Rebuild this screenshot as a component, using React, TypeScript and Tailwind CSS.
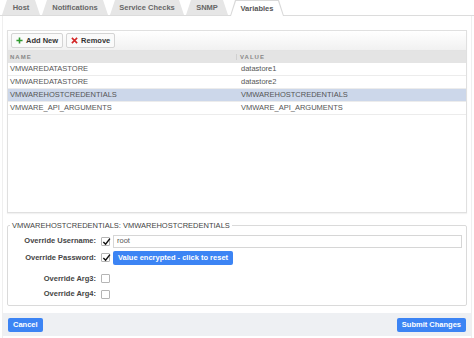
import React from 'react';

const TABS = [
  { label: 'Host', w: 38 },
  { label: 'Notifications', w: 66 },
  { label: 'Service Checks', w: 74 },
  { label: 'SNMP', w: 42 },
  { label: 'Variables', w: 54, active: true },
];

const ROWS = [
  { name: 'VMWAREDATASTORE', value: 'datastore1' },
  { name: 'VMWAREDATASTORE', value: 'datastore2' },
  { name: 'VMWAREHOSTCREDENTIALS', value: 'VMWAREHOSTCREDENTIALS', selected: true },
  { name: 'VMWARE_API_ARGUMENTS', value: 'VMWARE_API_ARGUMENTS' },
];

function Tab({ label, w, active }: { label: string; w: number; active?: boolean }) {
  if (active) {
    return (
      <div
        className="-mb-px h-[16px] bg-[#d9d9d9] pt-px [clip-path:polygon(5px_0,calc(100%_-_5px)_0,100%_100%,0_100%)]"
        style={{ width: w }}
      >
        <div className="flex h-full items-center justify-center bg-white font-bold text-[#555] [clip-path:polygon(6px_0,calc(100%_-_6px)_0,calc(100%_-_1px)_100%,1px_100%)]">
          {label}
        </div>
      </div>
    );
  }
  return (
    <div
      className="flex h-[15px] items-center justify-center bg-[#e6e6e6] font-bold text-[#666] [clip-path:polygon(5px_0,calc(100%_-_5px)_0,100%_100%,0_100%)]"
      style={{ width: w }}
    >
      {label}
    </div>
  );
}

function Check({ checked }: { checked?: boolean }) {
  return (
    <span className="relative inline-flex h-[9px] w-[9px] items-center justify-center rounded-[1px] border border-[#b5b5b5] bg-white">
      {checked && (
        <svg width="9" height="9" viewBox="0 0 10 10" className="absolute -top-[1px] left-0">
          <path d="M1.5 5.5 L4 8 L8.8 1.8" fill="none" stroke="#111" strokeWidth="1.6" />
        </svg>
      )}
    </span>
  );
}

function FieldRow({ label, children, className }: { label: string; children?: React.ReactNode; className?: string }) {
  return (
    <div className={'flex items-center ' + (className ?? '')}>
      <div className="w-[89px] pr-[1px] text-right font-bold text-[#444]">{label}</div>
      <div className="ml-[4px] flex items-center">{children}</div>
    </div>
  );
}

export default function App() {
  return (
    <div className="h-[338px] w-[474px] overflow-hidden bg-white font-['Liberation_Sans',Arial,sans-serif] text-[7.5px] leading-none text-[#444]">
      {/* Tab strip */}
      <div className="flex h-[16px] items-end gap-[2px] border-b border-[#dcdcdc] pl-[2px]">
        {TABS.map((t) => (
          <Tab key={t.label} {...t} />
        ))}
      </div>

      <div className="mx-[2px] flex h-[322px] flex-col border-x border-[#efefef]">
        {/* Grid panel */}
        <div className="mx-[4px] mt-[14px] flex h-[183px] flex-col border border-[#e0e0e0] shadow-[0_1px_1px_rgba(0,0,0,0.05)]">
          <div className="flex h-[20px] items-center gap-[3px] border-b border-[#e3e3e3] bg-gradient-to-b from-white to-[#f1f1f1] px-[3px]">
            <button className="flex h-[15px] items-center gap-[3px] rounded-[2px] border border-[#d4d4d4] bg-[#fafafa] px-[4px] font-bold text-[#333]">
              <svg width="7" height="7" viewBox="0 0 8 8">
                <path d="M4 0.5 V7.5 M0.5 4 H7.5" stroke="#2e9a2e" strokeWidth="1.8" />
              </svg>
              Add New
            </button>
            <button className="flex h-[15px] items-center gap-[3px] rounded-[2px] border border-[#d4d4d4] bg-[#fafafa] px-[4px] font-bold text-[#333]">
              <svg width="7" height="7" viewBox="0 0 8 8">
                <path d="M1 1 L7 7 M7 1 L1 7" stroke="#d32626" strokeWidth="1.8" />
              </svg>
              Remove
            </button>
          </div>
          <div className="flex h-[12px] items-center bg-[#e4e4e4] text-[6px] font-bold tracking-[1px] text-[#888]">
            <div className="w-[229px] border-r border-[#d0d0d0] pl-[2px]">NAME</div>
            <div className="pl-[3px]">VALUE</div>
          </div>
          <div className="flex-1 bg-white">
            {ROWS.map((r, i) => (
              <div
                key={i}
                className={
                  'flex h-[13px] items-center border-b border-[#ececec] text-[#555] ' +
                  (r.selected ? 'bg-[#ccd7ea]' : '')
                }
              >
                <div className="w-[230px] pl-[2px]">{r.name}</div>
                <div className="pl-[3px]">{r.value}</div>
              </div>
            ))}
          </div>
        </div>

        {/* Fieldset */}
        <fieldset className="mx-[4px] mt-[9px] h-[84px] rounded-[2px] border border-[#dadada] pl-0 pr-[4px]">
          <legend className="ml-[2px] px-[2px] text-[#444]">VMWAREHOSTCREDENTIALS: VMWAREHOSTCREDENTIALS</legend>
          <FieldRow label="Override Username:" className="mt-[5px] h-[13px]">
            <Check checked />
          </FieldRow>
          <div className="-mt-[13px] ml-[105px] flex h-[13px] items-center border border-[#d6d6d6] pl-[3px] text-[#555]">
            root
          </div>
          <FieldRow label="Override Password:" className="mt-[3px] h-[14px]">
            <Check checked />
            <button className="ml-[3px] h-[14px] rounded-[2px] bg-[#3c84f4] px-[5px] font-bold text-white">
              Value encrypted - click to reset
            </button>
          </FieldRow>
          <FieldRow label="Override Arg3:" className="mt-[7px] h-[14px]">
            <Check />
          </FieldRow>
          <FieldRow label="Override Arg4:" className="mt-[1px] h-[15px]">
            <Check />
          </FieldRow>
        </fieldset>

        {/* Footer */}
        <div className="mt-[7px] flex h-[23px] items-center justify-between bg-[#eef0f3] px-[5px]">
          <button className="h-[14px] rounded-[2px] bg-[#3c84f4] px-[5px] font-bold text-white">Cancel</button>
          <button className="h-[14px] rounded-[2px] bg-[#3c84f4] px-[5px] font-bold text-white">Submit Changes</button>
        </div>
      </div>
    </div>
  );
}
